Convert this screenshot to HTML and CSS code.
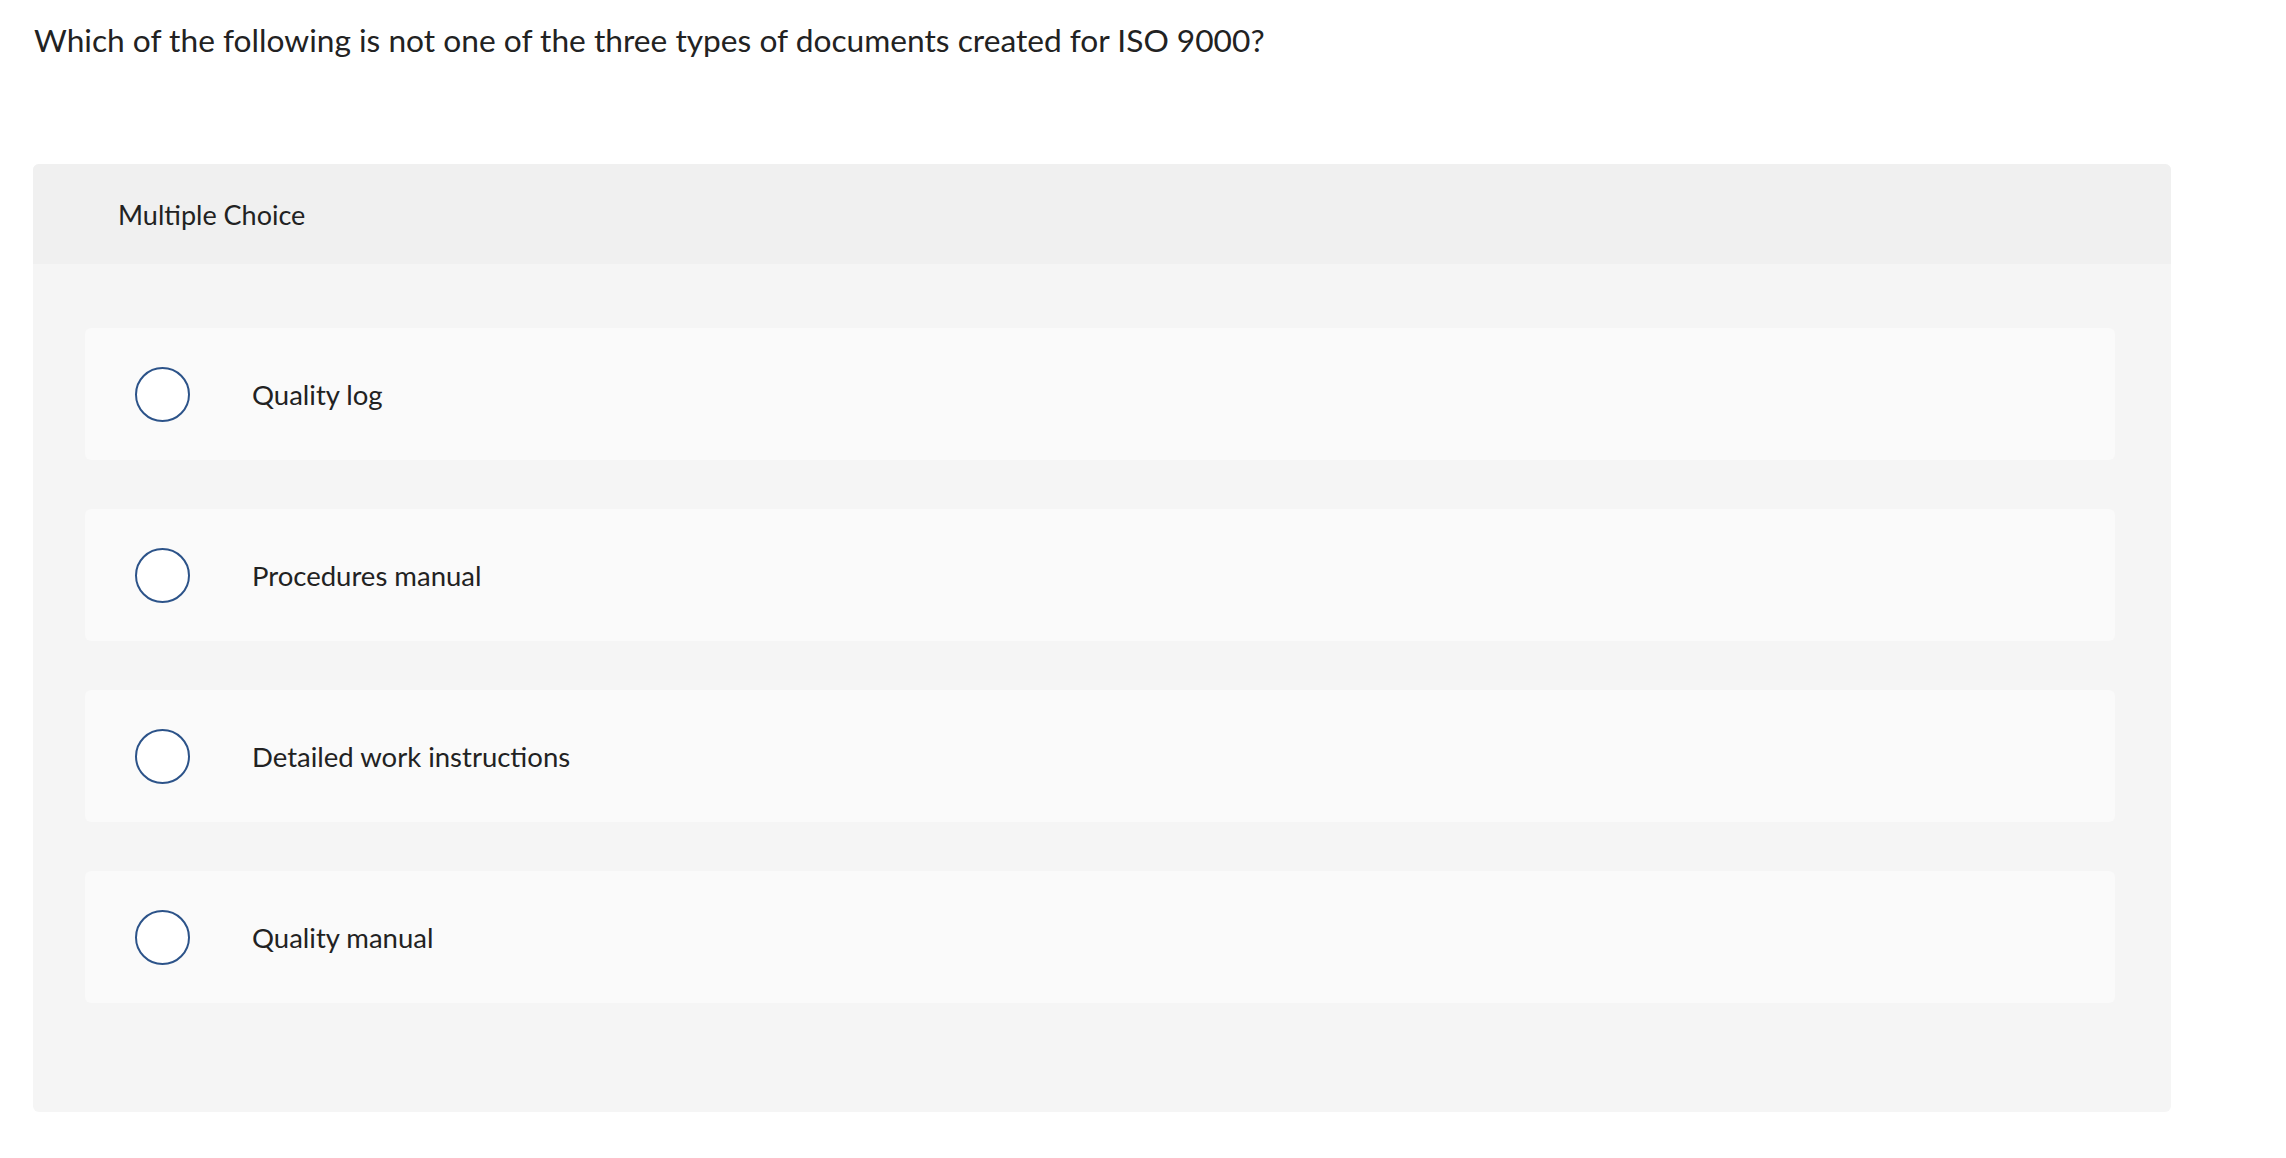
FILE: index.html
```html
<!DOCTYPE html>
<html lang="en">
<head>
<meta charset="UTF-8">
<meta name="viewport" content="width=device-width, initial-scale=1.0">
<title>Multiple Choice Question</title>
<link rel="stylesheet" href="styles.css">
</head>
<body>
<h1 class="question">Which of the following is not one of the three types of documents created for ISO 9000?</h1>
<div class="card">
    <div class="card-header">Multiple Choice</div>
    <div class="choices">
        <label class="choice">
            <input type="radio" class="radio" name="answer" value="a">
            <span class="choice-text">Quality log</span>
        </label>
        <label class="choice">
            <input type="radio" class="radio" name="answer" value="b">
            <span class="choice-text">Procedures manual</span>
        </label>
        <label class="choice">
            <input type="radio" class="radio" name="answer" value="c">
            <span class="choice-text">Detailed work instructions</span>
        </label>
        <label class="choice">
            <input type="radio" class="radio" name="answer" value="d">
            <span class="choice-text">Quality manual</span>
        </label>
    </div>
</div>
</body>
</html>
```

FILE: styles.css
```css
body {
    margin: 0;
    background-color: white;
    color: #222;
    font-family: Lato, "Open Sans", Arial, sans-serif;
}
.question {
    margin: 0;
    padding: 20px 0 0 34px;
    font-size: 31.7px;
    line-height: 40px;
    font-weight: 400;
}
.card {
    margin: 104px 0 0 33px;
    width: 2138px;
    background-color: #f5f5f5;
    border-radius: 6px;
    overflow: hidden;
}
.card-header {
    height: 100px;
    display: flex;
    align-items: center;
    padding-left: 85px;
    background-color: #f0f0f0;
    font-size: 27px;
}
.choices {
    display: flex;
    flex-direction: column;
    gap: 49px;
    padding: 64px 56px 109px 52px;
}
.choice {
    height: 132px;
    display: flex;
    align-items: center;
    padding-left: 50px;
    background-color: #fafafa;
    border-radius: 6px;
    cursor: pointer;
}
.radio {
    appearance: none;
    -webkit-appearance: none;
    margin: 0;
    width: 55px;
    height: 55px;
    box-sizing: border-box;
    border: 2px solid #2c5389;
    border-radius: 50%;
    background-color: white;
    cursor: pointer;
}
.radio:checked {
    background-color: #2c5389;
    box-shadow: inset 0 0 0 8px white;
}
.choice-text {
    margin-left: 62px;
    font-size: 27.5px;
}
```
